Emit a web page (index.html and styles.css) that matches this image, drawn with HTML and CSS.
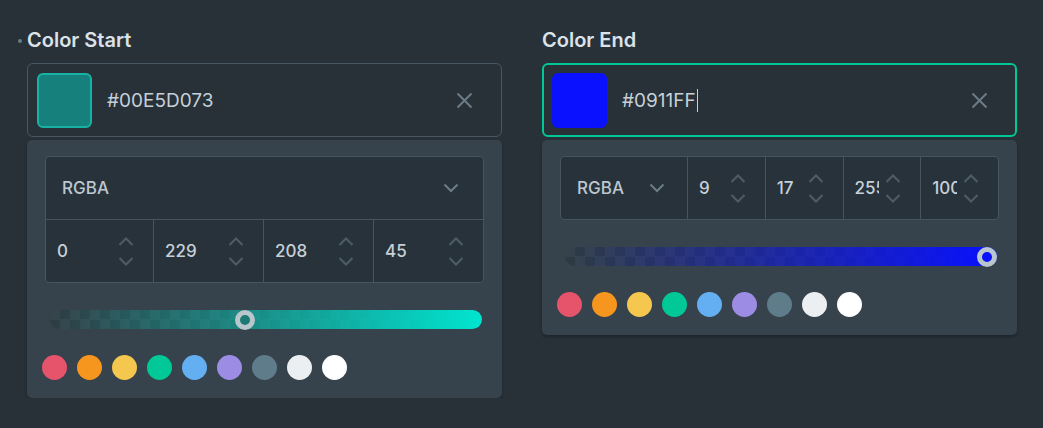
FILE: index.html
```html
<!DOCTYPE html>
<html lang="en">
<head>
<meta charset="UTF-8">
<title>Gradient colors</title>
<link rel="stylesheet" href="styles.css">
</head>
<body>
<div class="pickers">

  <!-- start color -->
  <section class="picker">
    <div class="picker-label changed"><span class="dot"></span>Color Start</div>
    <div class="color-field">
      <span class="swatch swatch-start"></span>
      <div class="hex">#00E5D073</div>
      <button type="button" class="clear" title="Clear">
        <svg viewBox="0 0 17 17"><path d="M1.5 1.5L15.5 15.5M15.5 1.5L1.5 15.5"/></svg>
      </button>
    </div>
    <div class="panel">
      <div class="channels">
        <div class="mode">RGBA
          <svg class="chevron" viewBox="0 0 16 10"><path d="M1.5 1.5L8 8L14.5 1.5"/></svg>
        </div>
        <div class="values">
          <div class="cell"><input type="text" value="0">
            <div class="spin">
              <svg viewBox="0 0 16 9"><path d="M1.5 8L8 1.5L14.5 8"/></svg>
              <svg viewBox="0 0 16 9"><path d="M1.5 1L8 7.5L14.5 1"/></svg>
            </div>
          </div>
          <div class="cell"><input type="text" value="229">
            <div class="spin">
              <svg viewBox="0 0 16 9"><path d="M1.5 8L8 1.5L14.5 8"/></svg>
              <svg viewBox="0 0 16 9"><path d="M1.5 1L8 7.5L14.5 1"/></svg>
            </div>
          </div>
          <div class="cell"><input type="text" value="208">
            <div class="spin">
              <svg viewBox="0 0 16 9"><path d="M1.5 8L8 1.5L14.5 8"/></svg>
              <svg viewBox="0 0 16 9"><path d="M1.5 1L8 7.5L14.5 1"/></svg>
            </div>
          </div>
          <div class="cell"><input type="text" value="45">
            <div class="spin">
              <svg viewBox="0 0 16 9"><path d="M1.5 8L8 1.5L14.5 8"/></svg>
              <svg viewBox="0 0 16 9"><path d="M1.5 1L8 7.5L14.5 1"/></svg>
            </div>
          </div>
        </div>
      </div>
      <div class="alpha alpha-start">
        <span class="thumb thumb-start" style="left: calc((100% - 20px) * 0.45)"></span>
      </div>
      <div class="presets">
        <span class="preset red"></span>
        <span class="preset orange"></span>
        <span class="preset yellow"></span>
        <span class="preset green"></span>
        <span class="preset blue"></span>
        <span class="preset purple"></span>
        <span class="preset slate"></span>
        <span class="preset light"></span>
        <span class="preset white"></span>
      </div>
    </div>
  </section>

  <!-- end color -->
  <section class="picker">
    <div class="picker-label">Color End</div>
    <div class="color-field focused">
      <span class="swatch swatch-end"></span>
      <div class="hex">#0911FF<span class="caret"></span></div>
      <button type="button" class="clear" title="Clear">
        <svg viewBox="0 0 17 17"><path d="M1.5 1.5L15.5 15.5M15.5 1.5L1.5 15.5"/></svg>
      </button>
    </div>
    <div class="panel">
      <div class="channels inline">
        <div class="mode">RGBA
          <svg class="chevron" viewBox="0 0 16 10"><path d="M1.5 1.5L8 8L14.5 1.5"/></svg>
        </div>
        <div class="cell"><input type="text" value="9">
          <div class="spin">
            <svg viewBox="0 0 16 9"><path d="M1.5 8L8 1.5L14.5 8"/></svg>
            <svg viewBox="0 0 16 9"><path d="M1.5 1L8 7.5L14.5 1"/></svg>
          </div>
        </div>
        <div class="cell"><input type="text" value="17">
          <div class="spin">
            <svg viewBox="0 0 16 9"><path d="M1.5 8L8 1.5L14.5 8"/></svg>
            <svg viewBox="0 0 16 9"><path d="M1.5 1L8 7.5L14.5 1"/></svg>
          </div>
        </div>
        <div class="cell"><input type="text" value="255">
          <div class="spin">
            <svg viewBox="0 0 16 9"><path d="M1.5 8L8 1.5L14.5 8"/></svg>
            <svg viewBox="0 0 16 9"><path d="M1.5 1L8 7.5L14.5 1"/></svg>
          </div>
        </div>
        <div class="cell"><input type="text" value="100">
          <div class="spin">
            <svg viewBox="0 0 16 9"><path d="M1.5 8L8 1.5L14.5 8"/></svg>
            <svg viewBox="0 0 16 9"><path d="M1.5 1L8 7.5L14.5 1"/></svg>
          </div>
        </div>
      </div>
      <div class="alpha alpha-end">
        <span class="thumb thumb-end" style="left: calc((100% - 20px) * 1)"></span>
      </div>
      <div class="presets">
        <span class="preset red"></span>
        <span class="preset orange"></span>
        <span class="preset yellow"></span>
        <span class="preset green"></span>
        <span class="preset blue"></span>
        <span class="preset purple"></span>
        <span class="preset slate"></span>
        <span class="preset light"></span>
        <span class="preset white"></span>
      </div>
    </div>
  </section>

</div>
</body>
</html>
```

FILE: styles.css
```css
body {
  margin: 0;
  background-color: #283138;
  font-family: Inter, "Noto Sans", sans-serif;
  color: #c5d0d8;
}

.pickers {
  display: grid;
  grid-template-columns: 475px 475px;
  column-gap: 40px;
  align-items: start;
  padding: 28px 0 0 27px;
}

.picker-label {
  display: flex;
  align-items: center;
  gap: 5px;
  height: 24px;
  margin-bottom: 11px;
  font-size: 20px;
  font-weight: 600;
  color: #dbe2e8;
}

.picker-label.changed {
  margin-left: -9px;
}

.dot {
  width: 4px;
  height: 4px;
  margin-top: 2px;
  border-radius: 50%;
  background-color: #6b7a84;
}

/* hex field */
.color-field {
  display: flex;
  align-items: center;
  height: 74px;
  box-sizing: border-box;
  padding: 0 28px 0 9px;
  border: 1px solid #485762;
  border-radius: 6px;
}

.color-field.focused {
  border: 2px solid #00c896;
  padding: 0 27px 0 8px;
}

.swatch {
  flex: none;
  width: 55px;
  height: 55px;
  box-sizing: border-box;
  border-radius: 6px;
}

.swatch-start {
  background-color: rgba(0, 229, 208, 0.45);
  border: 2px solid #17b2a3;
}

.swatch-end {
  background-color: #0911ff;
}

.hex {
  flex: 1;
  display: flex;
  align-items: center;
  margin-left: 15px;
  font-size: 19px;
  color: #c5d0d8;
}

.caret {
  width: 1px;
  height: 23px;
  margin-left: 1px;
  background-color: #c5d0d8;
}

.clear {
  display: flex;
  width: 17px;
  height: 17px;
  padding: 0;
  border: none;
  background: none;
  cursor: pointer;
}

.clear svg {
  width: 17px;
  height: 17px;
  fill: none;
  stroke: #6b7c88;
  stroke-width: 2;
}

/* dropdown panel */
.panel {
  margin-top: 3px;
  padding: 16px 18px 18px;
  background-color: #36434c;
  border-radius: 5px;
  box-shadow: 0 2px 3px rgba(0, 0, 0, 0.25);
}

.channels {
  background-color: #28323a;
  border: 1px solid #47555f;
  border-radius: 4px;
  overflow: hidden;
}

.channels.inline {
  display: grid;
  grid-template-columns: 126px repeat(4, 1fr);
}

.mode {
  display: flex;
  align-items: center;
  justify-content: space-between;
  height: 62px;
  padding: 0 24px 0 16px;
  font-size: 17px;
  font-weight: 500;
  color: #bcc7d0;
}

.inline .mode {
  padding-right: 22px;
}

.chevron {
  width: 16px;
  height: 10px;
  fill: none;
  stroke: #6b7c88;
  stroke-width: 2;
}

.values {
  display: grid;
  grid-template-columns: 107px repeat(3, 1fr);
  border-top: 1px solid #47555f;
}

.cell {
  display: flex;
  align-items: center;
  height: 62px;
  padding: 0 19px 0 11px;
  border-left: 1px solid #47555f;
}

.values .cell:first-child {
  border-left: none;
}

.cell input {
  flex: 1;
  width: 0;
  min-width: 0;
  padding: 0;
  border: none;
  outline: none;
  background: none;
  font-family: inherit;
  font-size: 17px;
  font-weight: 500;
  color: #c5d0d8;
}

.spin {
  flex: none;
  display: flex;
  flex-direction: column;
  gap: 11px;
  margin-left: 6px;
}

.spin svg {
  display: block;
  width: 16px;
  height: 9px;
  fill: none;
  stroke: #4d5d68;
  stroke-width: 2;
}

/* alpha slider */
.alpha {
  position: relative;
  height: 19px;
  margin: 27px 2px 0 5px;
  border-radius: 10px;
  background-size: auto, 20px 19px;
}

.alpha-start {
  background-image:
    linear-gradient(to right, rgba(0, 229, 208, 0), rgb(0, 229, 208)),
    conic-gradient(#2e3b42 25%, #36434b 0 50%, #2e3b42 0 75%, #36434b 0);
}

.alpha-end {
  background-image:
    linear-gradient(to right, rgba(9, 17, 255, 0), rgb(9, 17, 255)),
    conic-gradient(#2e3b42 25%, #36434b 0 50%, #2e3b42 0 75%, #36434b 0);
}

.thumb {
  position: absolute;
  top: 50%;
  width: 20px;
  height: 20px;
  box-sizing: border-box;
  border: 5px solid #b9c6ce;
  border-radius: 50%;
  transform: translateY(-50%);
}

.thumb-start {
  background-color: #1d7a73;
}

.thumb-end {
  background-color: #0911ff;
}

/* preset colors */
.presets {
  display: flex;
  gap: 10px;
  margin: 26px 0 0 -3px;
}

.preset {
  width: 25px;
  height: 25px;
  border-radius: 50%;
}

.red { background-color: #e5546b; }
.orange { background-color: #f7961e; }
.yellow { background-color: #f5c74f; }
.green { background-color: #00c897; }
.blue { background-color: #64aff2; }
.purple { background-color: #9d8ce3; }
.slate { background-color: #5f7c8a; }
.light { background-color: #eceff1; }
.white { background-color: #ffffff; }
```
